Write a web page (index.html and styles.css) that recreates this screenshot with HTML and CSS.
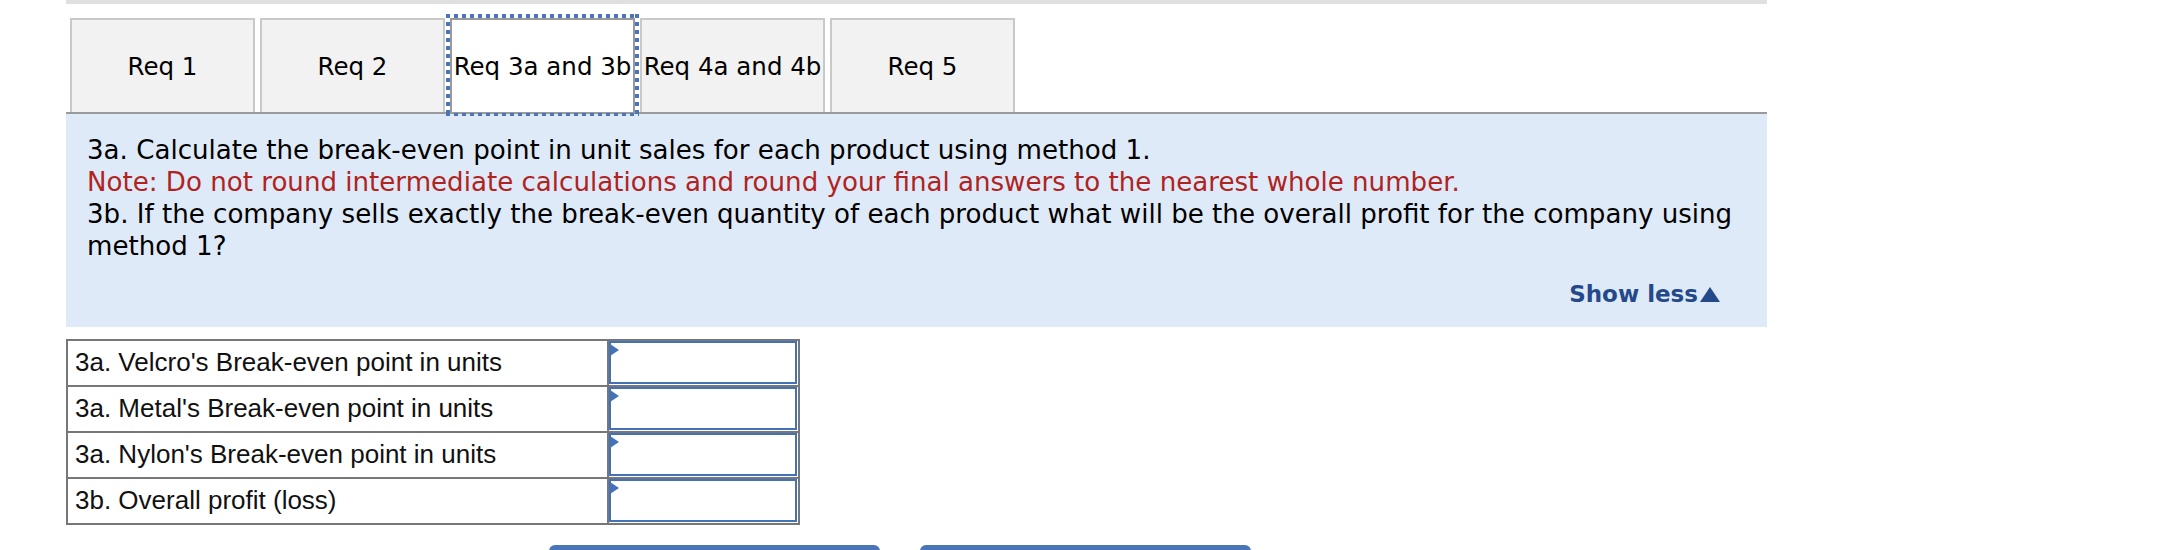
FILE: index.html
```html
<!DOCTYPE html>
<html lang="en">
<head>
<meta charset="utf-8">
<title>Req 3a and 3b</title>
<link rel="stylesheet" href="styles.css">
</head>
<body>
<div class="page">
  <div class="topbar"></div>
  <div class="tabs">
    <button class="tab">Req 1</button>
    <button class="tab">Req 2</button>
    <button class="tab active">Req 3a and 3b</button>
    <button class="tab">Req 4a and 4b</button>
    <button class="tab">Req 5</button>
  </div>
  <div class="panel">
    <p class="question">3a. Calculate the break-even point in unit sales for each product using method 1.<br><span class="note">Note: Do not round intermediate calculations and round your final answers to the nearest whole number.</span><br>3b. If the company sells exactly the break-even quantity of each product what will be the overall profit for the company using method 1?</p>
    <div class="toggle-row">
      <a class="toggle">Show less<svg class="tri" width="20" height="15" viewBox="0 0 20 15"><polygon points="10,0 20,15 0,15" fill="#24498a"/></svg></a>
    </div>
  </div>
  <table class="answers">
    <tr><td class="label">3a. Velcro's Break-even point in units</td><td class="entry"><input class="field" type="text"></td></tr>
    <tr><td class="label">3a. Metal's Break-even point in units</td><td class="entry"><input class="field" type="text"></td></tr>
    <tr><td class="label">3a. Nylon's Break-even point in units</td><td class="entry"><input class="field" type="text"></td></tr>
    <tr><td class="label">3b. Overall profit (loss)</td><td class="entry"><input class="field" type="text"></td></tr>
  </table>
  <div class="nav">
    <button class="navbtn" aria-label="Previous: Req 2"></button>
    <button class="navbtn" aria-label="Next: Req 4a and 4b"></button>
  </div>
</div>
</body>
</html>
```

FILE: styles.css
```css
html, body {
  margin: 0;
  padding: 0;
  background: #ffffff;
  overflow: hidden;
}

.page {
  margin-left: 66px;
  width: 1701px;
  font-family: Verdana, "DejaVu Sans", sans-serif;
  color: #000;
}

.topbar {
  height: 4px;
  background: #e0e0e0;
}

.tabs {
  display: flex;
  align-items: flex-end;
  margin-top: 14px;
  padding-left: 4px;
  border-bottom: 2px solid #9a9a9a;
}

.tab {
  box-sizing: border-box;
  width: 185px;
  height: 94px;
  margin-right: 5px;
  padding: 0;
  background: #f2f2f2;
  border: 2px solid #c9c9c9;
  border-bottom: none;
  font-family: Verdana, "DejaVu Sans", sans-serif;
  font-size: 24.5px;
  color: #000;
  text-align: center;
  white-space: nowrap;
  cursor: pointer;
}

.tab.active {
  position: relative;
  background: #ffffff;
  border-color: #9a9a9a;
}

.tab.active::after {
  content: "";
  position: absolute;
  top: -6px;
  left: -6px;
  right: -6px;
  bottom: -4px;
  pointer-events: none;
  background:
    repeating-linear-gradient(90deg, #4a76b8 0 4px, transparent 4px 8px) top left / 100% 4px no-repeat,
    repeating-linear-gradient(90deg, #4a76b8 0 4px, transparent 4px 8px) bottom left / 100% 3px no-repeat,
    repeating-linear-gradient(180deg, #4a76b8 0 4px, transparent 4px 8px) top left / 4px 100% no-repeat,
    repeating-linear-gradient(180deg, #4a76b8 0 4px, transparent 4px 8px) top right / 4px 100% no-repeat;
}

.panel {
  background: #deeaf7;
  padding: 21px 21px 20px 21px;
}

.question {
  margin: 0;
  font-size: 26.1px;
  line-height: 31.9px;
}

.note {
  color: #b0231f;
}

.toggle-row {
  display: flex;
  justify-content: flex-end;
  margin-top: 18px;
  padding-right: 26px;
}

.toggle {
  display: flex;
  align-items: center;
  gap: 2px;
  font-size: 23px;
  font-weight: bold;
  color: #24498a;
  cursor: pointer;
}

.tri {
  display: block;
  margin-top: 1px;
}

.answers {
  margin-top: 12px;
  width: 734px;
  border-collapse: separate;
  border-spacing: 0;
  border-top: 2px solid #777;
  border-left: 2px solid #777;
  font-family: Arial, "Liberation Sans", sans-serif;
  font-size: 26px;
}

.answers td {
  height: 44px;
  padding: 0;
  border-right: 2px solid #777;
  border-bottom: 2px solid #777;
  vertical-align: middle;
}

.label {
  width: 532px;
  padding-left: 7px !important;
  color: #111;
}

.entry {
  position: relative;
  vertical-align: top !important;
}

.entry::before {
  content: "";
  position: absolute;
  left: 1px;
  top: 3px;
  width: 0;
  height: 0;
  border-top: 6px solid transparent;
  border-bottom: 6px solid transparent;
  border-left: 9px solid #4472b8;
}

.field {
  display: block;
  box-sizing: border-box;
  width: 188px;
  height: 43px;
  margin: 0;
  border: 2px solid #4472b8;
  background: #fff;
  outline: none;
}

.nav {
  display: flex;
  gap: 40px;
  margin-top: 20px;
  margin-left: 483px;
}

.navbtn {
  width: 331px;
  height: 52px;
  border: none;
  border-radius: 6px 6px 0 0;
  background: #4a76b8;
}
```
